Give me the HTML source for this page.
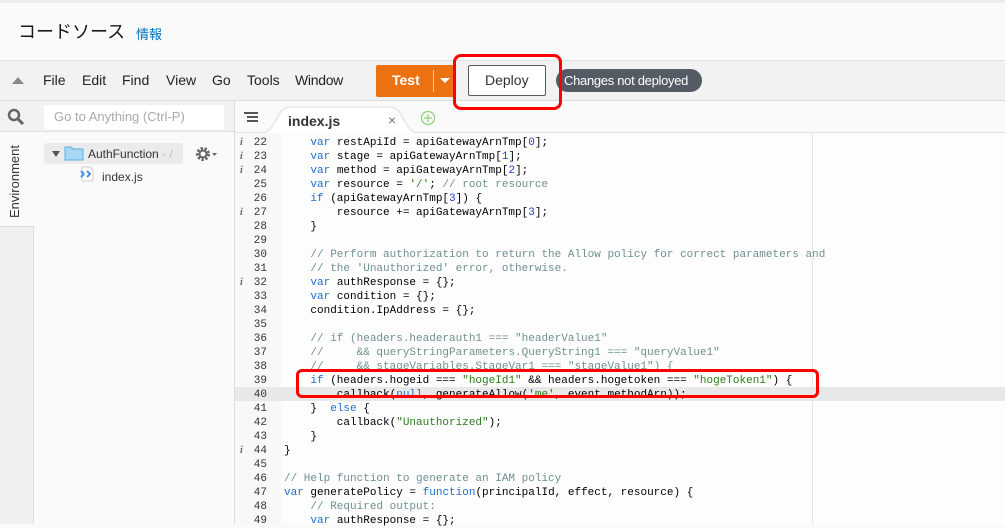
<!DOCTYPE html>
<html><head><meta charset="utf-8"><style>
*{margin:0;padding:0;box-sizing:border-box}
body{width:1005px;height:524px;overflow:hidden;background:#fafafa;font-family:"Liberation Sans","Noto Sans CJK JP",sans-serif;position:relative}
.abs{position:absolute}
.code{font-family:"Liberation Mono",monospace;font-size:11px;color:#000;white-space:pre}
.ln{position:absolute;left:234px;width:33px;text-align:right;font-family:"Liberation Mono",monospace;font-size:11px;color:#333;height:14px;line-height:14px}
.cl{position:absolute;left:284px;height:14px;line-height:14px}
.k{color:#1f6ecd}.s{color:#2c7d1a}.c{color:#6f9090}.n{color:#1f3fcd}
.i{position:absolute;left:240px;font-family:"Liberation Serif",serif;font-style:italic;font-weight:bold;font-size:10px;color:#666;height:14px;line-height:14px}
.m{position:absolute;top:72px;font-size:14px;color:#222}
</style></head><body>
<div class="abs" style="left:0;top:0;width:1005px;height:3px;background:#ececec"></div>
<div class="abs" style="left:18px;top:18px;font-size:18px;color:#16191f">コードソース</div>
<div class="abs" style="left:136px;top:24px;font-size:13px;color:#0073bb">情報</div>
<!-- toolbar -->
<div class="abs" style="left:0;top:60px;width:1005px;height:41px;background:#f2f2f2;border-top:1px solid #e2e2e2;border-bottom:1px solid #dcdcdc"></div>
<div class="abs" style="left:12px;top:77px;width:0;height:0;border-left:6px solid transparent;border-right:6px solid transparent;border-bottom:7px solid #888"></div>
<div class="m" style="left:43px">File</div>
<div class="m" style="left:82px">Edit</div>
<div class="m" style="left:122px">Find</div>
<div class="m" style="left:166px">View</div>
<div class="m" style="left:212px">Go</div>
<div class="m" style="left:247px">Tools</div>
<div class="m" style="left:295px;letter-spacing:-0.3px">Window</div>
<div class="abs" style="left:376px;top:65px;width:79px;height:32px;background:#ec7211;border-radius:2px"></div>
<div class="abs" style="left:392px;top:72px;font-size:14px;font-weight:bold;color:#fff">Test</div>
<div class="abs" style="left:433px;top:70px;width:1px;height:22px;background:#f8c9a0"></div>
<div class="abs" style="left:440px;top:78px;border-left:5px solid transparent;border-right:5px solid transparent;border-top:5px solid #fff"></div>
<div class="abs" style="left:468px;top:65px;width:78px;height:31px;background:#fff;border:1px solid #545b64;border-radius:2px"></div>
<div class="abs" style="left:485px;top:72px;font-size:14px;color:#333">Deploy</div>
<div class="abs" style="left:556px;top:69px;width:146px;height:23px;background:#545b64;border-radius:12px"></div>
<div class="abs" style="left:564px;top:73px;font-size:13px;letter-spacing:-0.3px;color:#fff">Changes not deployed</div>
<!-- sidebar -->
<div class="abs" style="left:0;top:101px;width:234px;height:31px;background:#f2f2f2;border-bottom:1px solid #ddd"></div>
<svg class="abs" style="left:7px;top:108px" width="18" height="18"><circle cx="7" cy="7" r="5" fill="none" stroke="#666" stroke-width="2.5"/><line x1="11" y1="11" x2="16" y2="16" stroke="#666" stroke-width="3"/></svg>
<div class="abs" style="left:44px;top:105px;width:180px;height:24px;background:#fff"></div>
<div class="abs" style="left:54px;top:109px;font-size:13px;color:#aaa">Go to Anything (Ctrl-P)</div>
<div class="abs" style="left:0;top:132px;width:34px;height:392px;background:#f0f0f0;border-right:1px solid #ddd"></div>
<div class="abs" style="left:0;top:132px;width:34px;height:95px;background:#fafafa"></div>
<div class="abs" style="left:0;top:226px;width:34px;height:1px;background:#ddd"></div>
<div class="abs" style="left:7px;top:218px;font-size:13px;color:#333;transform:rotate(-90deg);transform-origin:0 0;white-space:nowrap">Environment</div>
<div class="abs" style="left:44px;top:143px;width:139px;height:21px;background:#ebebeb;border-radius:3px"></div>
<div class="abs" style="left:52px;top:151px;border-left:4px solid transparent;border-right:4px solid transparent;border-top:6px solid #555"></div>
<svg class="abs" style="left:64px;top:145px" width="20" height="16"><path d="M1 2h6l2 2h10v11H1z" fill="#a9d8f5" stroke="#5ab0e6"/></svg>
<div class="abs" style="left:88px;top:147px;font-size:12px;color:#333">AuthFunction <span style="color:#bbb">- /</span></div>
<svg class="abs" style="left:195px;top:146px" width="24" height="16"><circle cx="8" cy="8" r="5.5" fill="none" stroke="#666" stroke-width="3" stroke-dasharray="2.3 1.6"/><circle cx="8" cy="8" r="3.5" fill="none" stroke="#666" stroke-width="2"/><path d="M17 7l2.5 3 2.5-3z" fill="#666"/></svg>
<svg class="abs" style="left:78px;top:166px" width="16" height="16"><path d="M4 1h8l3 3v11H4z" fill="#fff" stroke="#ccc"/><path d="M6 8l-3-3M6 8l-3 3M9 5l3 3-3 3" stroke="#4a90e2" stroke-width="2" fill="none"/></svg>
<div class="abs" style="left:102px;top:170px;font-size:12px;color:#333">index.js</div>
<!-- tab bar -->
<div class="abs" style="left:234px;top:101px;width:771px;height:32px;background:#fafafa;border-left:1px solid #ddd;border-bottom:1px solid #e0e0e0"></div>
<svg class="abs" style="left:244px;top:112px" width="16" height="12"><rect x="0" y="0" width="14" height="2" fill="#555"/><rect x="3" y="4" width="11" height="2" fill="#555"/><rect x="3" y="8" width="11" height="2" fill="#555"/></svg>
<svg class="abs" style="left:262px;top:106px" width="160" height="28"><path d="M0 27 C14 27 14 1 28 1 H128 C142 1 142 27 156 27" fill="#fff" stroke="#ddd"/></svg>
<div class="abs" style="left:288px;top:113px;font-size:14px;font-weight:bold;color:#333">index.js</div>
<div class="abs" style="left:388px;top:112px;font-size:14px;color:#777">×</div>
<svg class="abs" style="left:420px;top:110px" width="16" height="16"><circle cx="8" cy="8" r="6.5" fill="none" stroke="#8fcf7a" stroke-width="1.2"/><path d="M8 4v8M4 8h8" stroke="#8fcf7a" stroke-width="1.2"/></svg>
<!-- editor -->
<div class="abs" style="left:234px;top:133px;width:771px;height:391px;background:#fdfdfd;border-left:1px solid #ddd"></div>
<div class="abs" style="left:235px;top:133px;width:46px;height:391px;background:#f8f8f8"></div>
<div class="abs" style="left:812px;top:133px;width:1px;height:391px;background:#e5e5e5"></div>
<div class="abs" style="left:235px;top:387px;width:770px;height:14px;background:#e8e8e8"></div>
<div class="code abs" style="left:0;top:2px;width:1005px;height:524px">
<div class="ln" style="top:134px">22</div><div class="cl" style="top:134px">    <span class="k">var</span> restApiId = apiGatewayArnTmp[<span class="n">0</span>];</div>
<div class="ln" style="top:148px">23</div><div class="cl" style="top:148px">    <span class="k">var</span> stage = apiGatewayArnTmp[<span class="n">1</span>];</div>
<div class="ln" style="top:162px">24</div><div class="cl" style="top:162px">    <span class="k">var</span> method = apiGatewayArnTmp[<span class="n">2</span>];</div>
<div class="ln" style="top:176px">25</div><div class="cl" style="top:176px">    <span class="k">var</span> resource = <span class="s">'/'</span>; <span class="c">// root resource</span></div>
<div class="ln" style="top:190px">26</div><div class="cl" style="top:190px">    <span class="k">if</span> (apiGatewayArnTmp[<span class="n">3</span>]) {</div>
<div class="ln" style="top:204px">27</div><div class="cl" style="top:204px">        resource += apiGatewayArnTmp[<span class="n">3</span>];</div>
<div class="ln" style="top:218px">28</div><div class="cl" style="top:218px">    }</div>
<div class="ln" style="top:232px">29</div>
<div class="ln" style="top:246px">30</div><div class="cl" style="top:246px">    <span class="c">// Perform authorization to return the Allow policy for correct parameters and</span></div>
<div class="ln" style="top:260px">31</div><div class="cl" style="top:260px">    <span class="c">// the 'Unauthorized' error, otherwise.</span></div>
<div class="ln" style="top:274px">32</div><div class="cl" style="top:274px">    <span class="k">var</span> authResponse = {};</div>
<div class="ln" style="top:288px">33</div><div class="cl" style="top:288px">    <span class="k">var</span> condition = {};</div>
<div class="ln" style="top:302px">34</div><div class="cl" style="top:302px">    condition.IpAddress = {};</div>
<div class="ln" style="top:316px">35</div>
<div class="ln" style="top:330px">36</div><div class="cl" style="top:330px">    <span class="c">// if (headers.headerauth1 === "headerValue1"</span></div>
<div class="ln" style="top:344px">37</div><div class="cl" style="top:344px">    <span class="c">//     &amp;&amp; queryStringParameters.QueryString1 === "queryValue1"</span></div>
<div class="ln" style="top:358px">38</div><div class="cl" style="top:358px">    <span class="c">//     &amp;&amp; stageVariables.StageVar1 === "stageValue1") {</span></div>
<div class="ln" style="top:372px">39</div><div class="cl" style="top:372px">    <span class="k">if</span> (headers.hogeid === <span class="s">"hogeId1"</span> &amp;&amp; headers.hogetoken === <span class="s">"hogeToken1"</span>) {</div>
<div class="ln" style="top:386px">40</div><div class="cl" style="top:386px">        callback(<span class="k">null</span>, generateAllow(<span class="s">'me'</span>, event.methodArn));</div>
<div class="ln" style="top:400px">41</div><div class="cl" style="top:400px">    }  <span class="k">else</span> {</div>
<div class="ln" style="top:414px">42</div><div class="cl" style="top:414px">        callback(<span class="s">"Unauthorized"</span>);</div>
<div class="ln" style="top:428px">43</div><div class="cl" style="top:428px">    }</div>
<div class="ln" style="top:442px">44</div><div class="cl" style="top:442px">}</div>
<div class="ln" style="top:456px">45</div>
<div class="ln" style="top:470px">46</div><div class="cl" style="top:470px"><span class="c">// Help function to generate an IAM policy</span></div>
<div class="ln" style="top:484px">47</div><div class="cl" style="top:484px"><span class="k">var</span> generatePolicy = <span class="k">function</span>(principalId, effect, resource) {</div>
<div class="ln" style="top:498px">48</div><div class="cl" style="top:498px">    <span class="c">// Required output:</span></div>
<div class="ln" style="top:512px">49</div><div class="cl" style="top:512px">    <span class="k">var</span> authResponse = {};</div>
<div class="i" style="top:134px">i</div><div class="i" style="top:148px">i</div><div class="i" style="top:162px">i</div><div class="i" style="top:204px">i</div><div class="i" style="top:274px">i</div><div class="i" style="top:442px">i</div>
</div>
<!-- red annotations -->
<div class="abs" style="left:453px;top:54px;width:109px;height:56px;border:3px solid #f00;border-radius:8px"></div>
<div class="abs" style="left:296px;top:369px;width:523px;height:29px;border:3px solid #f00;border-radius:6px"></div>
</body></html>
